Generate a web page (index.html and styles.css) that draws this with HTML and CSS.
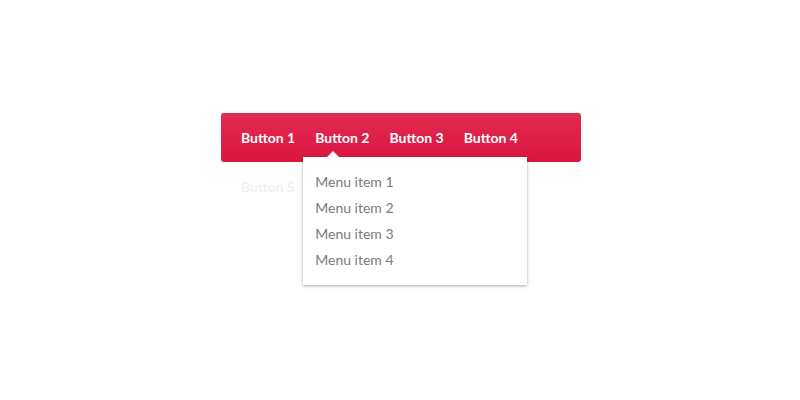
FILE: index.html
```html
<!DOCTYPE html>
<html lang="en">
<head>
  <meta charset="UTF-8" />
  <title>Dropdown Menu</title>
  <link rel="stylesheet" href="styles.css">
</head>
<body>

<nav class="nav">
  <ul class="nav-list">
    <li class="nav-item"><a href="#">Button 1</a></li>
    <li class="nav-item open">
      <a href="#">Button 2</a>
      <ul class="dropdown">
        <li><a href="#">Menu item 1</a></li>
        <li><a href="#">Menu item 2</a></li>
        <li><a href="#">Menu item 3</a></li>
        <li><a href="#">Menu item 4</a></li>
      </ul>
    </li>
    <li class="nav-item"><a href="#">Button 3</a></li>
    <li class="nav-item"><a href="#">Button 4</a></li>
    <li class="nav-item"><a href="#">Button 5</a></li>
  </ul>
</nav>

</body>
</html>
```

FILE: styles.css
```css
html {
  background: #fff;
}

body {
  margin: 0;
  font-family: Lato, "Open Sans", sans-serif;
  padding-top: 113px;
  min-height: 287px;
}

.nav {
  width: 360px;
  height: 49px;
  margin-left: 221px;
  background: linear-gradient(#e32a50, #d9163f);
  border-radius: 3px;
}

.nav-list {
  list-style: none;
  margin: 0;
  padding: 0 10px;
  display: flex;
  flex-wrap: wrap;
}

.nav-item {
  position: relative;
}

.nav-item > a {
  display: block;
  padding: 0 10px;
  line-height: 49px;
  color: #fff;
  font-size: 14px;
  font-weight: bold;
  text-decoration: none;
}

/* wrapped item: white on white, barely visible */
.nav-item:last-child > a {
  color: #f0f0f0;
}

.dropdown {
  position: absolute;
  top: 44px;
  left: -2px;
  width: 224px;
  margin: 0;
  padding: 12px 0;
  list-style: none;
  background: #fff;
  box-shadow: 0 1px 3px rgba(0, 0, 0, 0.35);
  z-index: 2;
}

.dropdown::before {
  content: "";
  position: absolute;
  top: -6px;
  left: 24px;
  border-left: 6px solid transparent;
  border-right: 6px solid transparent;
  border-bottom: 6px solid #fff;
}

.dropdown a {
  display: block;
  padding: 0 12px;
  line-height: 26px;
  font-size: 14px;
  color: #7b7b7b;
  text-decoration: none;
}
```
